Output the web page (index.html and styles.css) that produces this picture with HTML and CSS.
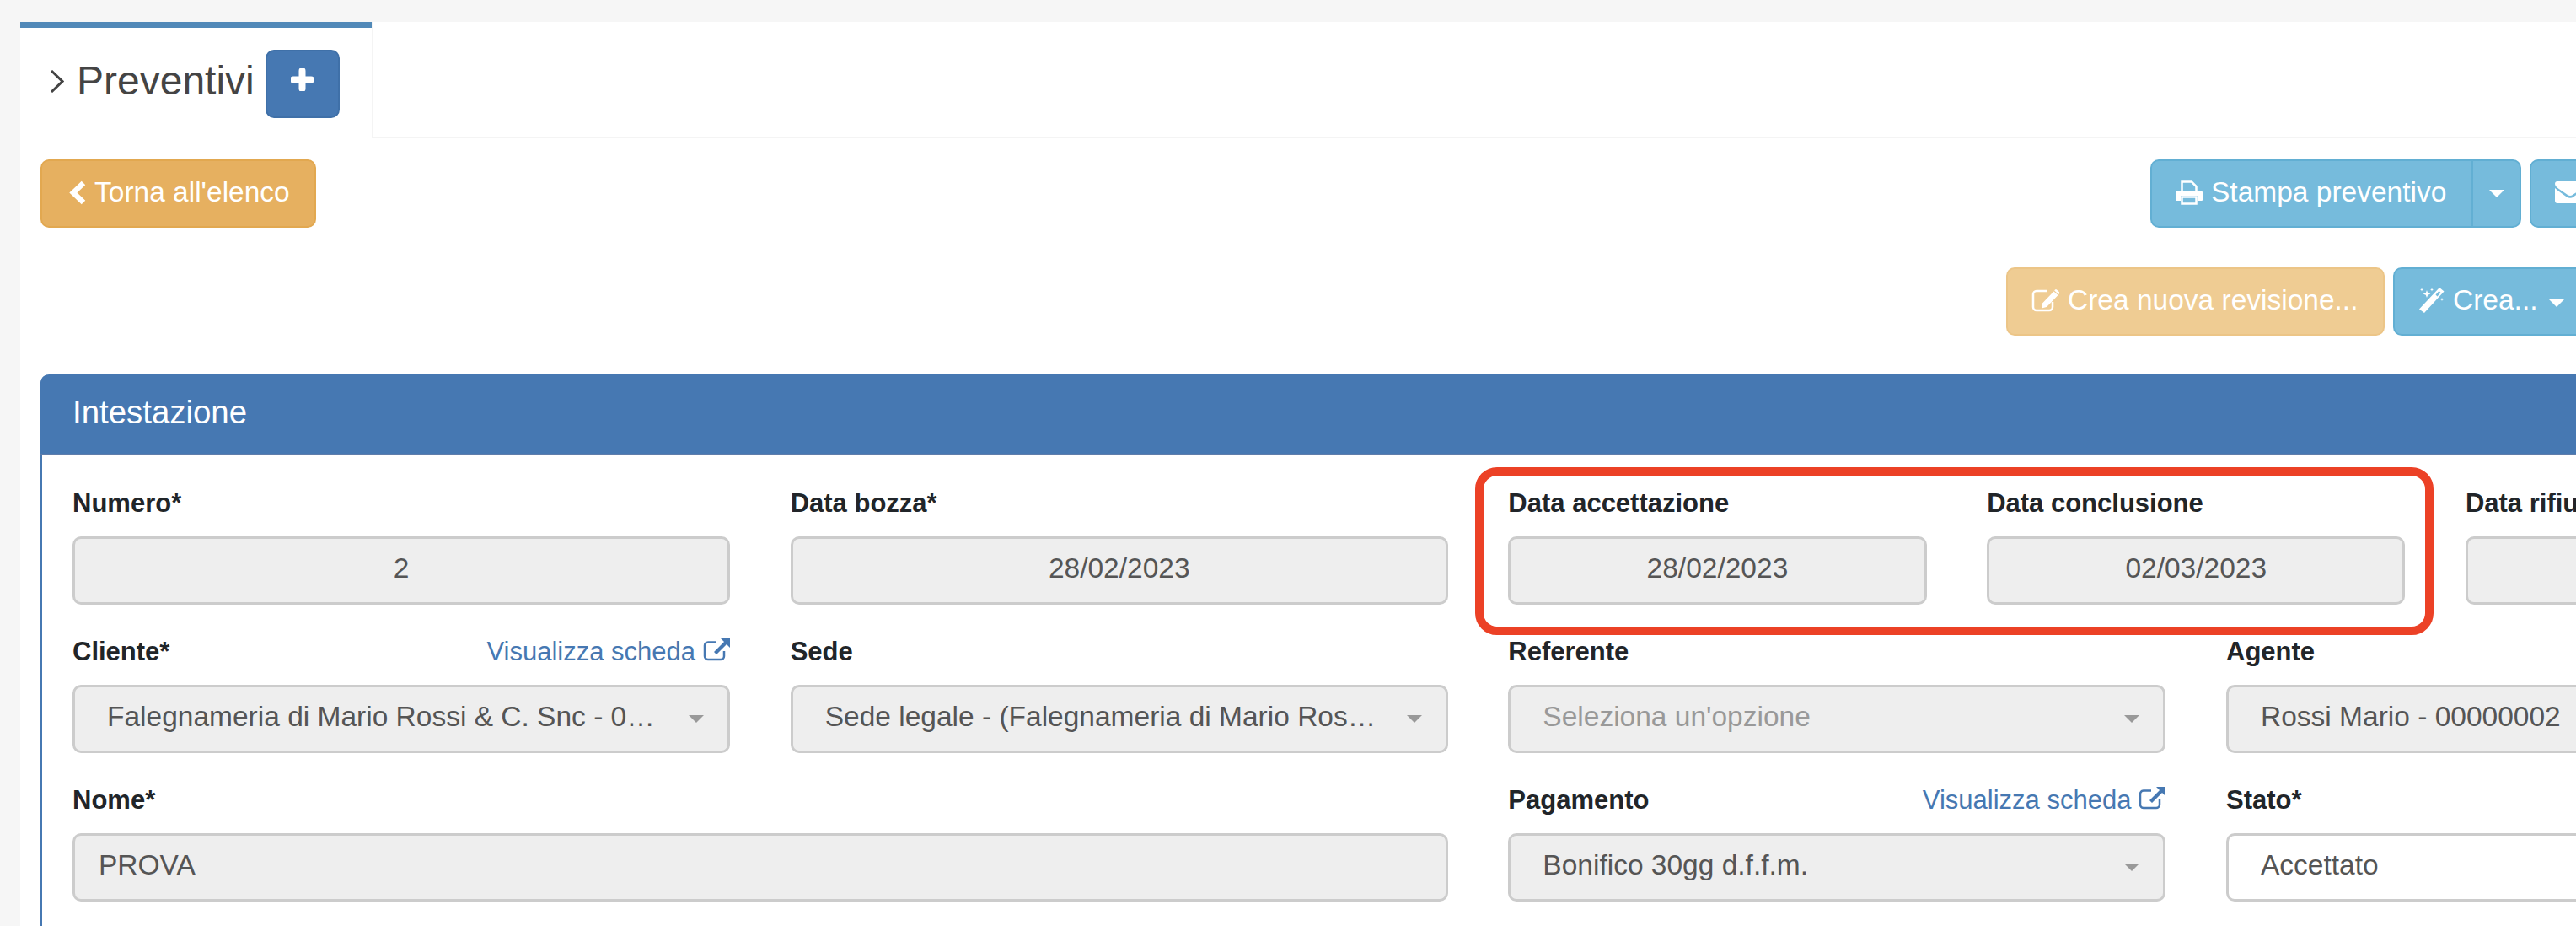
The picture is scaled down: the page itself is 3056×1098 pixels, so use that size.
FILE: index.html
```html
<!DOCTYPE html>
<html lang="it">
<head>
<meta charset="utf-8">
<title>Preventivi</title>
<link rel="stylesheet" href="styles.css">
</head>
<body>
<main class="card">
  <header class="tabs">
    <div class="tab">
      <svg class="tab-chevron" viewBox="0 0 16 27"><path d="M1 1l13 12.500L1 26"/></svg>
      <h1 class="tab-title">Preventivi</h1>
      <button class="btn-add" type="button" aria-label="Aggiungi"><svg viewBox="0 0 27 27"><path d="M13.500 3v21M3 13.500h21"/></svg></button>
    </div>
    <div class="tab-rest"></div>
  </header>

  <div class="toolbar">
    <button class="btn btn-warning btn-back" type="button">
      <svg class="ico-back" viewBox="0 0 20 29"><path d="M17 3L5 14.500 17 26"/></svg>
      Torna all'elenco
    </button>
    <div class="btn-group">
      <button class="btn btn-info btn-print" type="button">
        <svg class="ico-print" viewBox="0 0 32 29"><path class="solid" d="M2 12h28a2 2 0 0 1 2 2v9a1 1 0 0 1-1 1h-5v-6H6v6H1a1 1 0 0 1-1-1v-9a2 2 0 0 1 2-2z"/><path class="line" d="M7.500 12V1.500h11.500l5.500 5.500v5M7.500 19.500h17v8h-17z"/></svg>
        Stampa preventivo
      </button>
      <button class="btn btn-info btn-split" type="button" aria-label="Altre opzioni"><span class="caret"></span></button>
      <button class="btn btn-info btn-mail" type="button" aria-label="Invia">
        <svg class="ico-mail" viewBox="0 0 36 26"><path class="solid" d="M0 3a3 3 0 0 1 3-3h30a3 3 0 0 1 3 3c0 2-2 4-4 5.500l-11 7.500c-2 1.300-4 1.300-6 0L4 8.500C2 7 0 5 0 3zM0 8c3 3 8 6 14 10.500 2.500 1.700 5.500 1.700 8 0C28 14 33 11 36 8v15a3 3 0 0 1-3 3H3a3 3 0 0 1-3-3z"/></svg>
      </button>
    </div>
  </div>

  <div class="toolbar toolbar-second">
    <div class="btn-group">
      <button class="btn btn-warning btn-muted btn-revision" type="button">
        <svg class="ico-edit" viewBox="0 0 33 28"><path class="line" d="M19 3H6a4 4 0 0 0-4 4v15a4 4 0 0 0 4 4h15a4 4 0 0 0 4-4v-6"/><path class="solid" d="M26.500 3.500l5 4.500L18 22l-6 1.500 1-6zM28 1.500a1.500 1.500 0 0 1 2 0l3 2.800a1.500 1.500 0 0 1 0 2l-.800.800-5-4.500z"/></svg>
        Crea nuova revisione...
      </button>
      <button class="btn btn-info btn-create" type="button">
        <svg class="ico-wand" viewBox="0 0 30 30"><path class="solid" d="M24 0l5.500 4.500L6 30 0 25.500zM23.500 4l-4 4.500 2 2 4-4.500z" fill-rule="evenodd"/><path class="solid" d="M9 3l1.200 3.300L13.500 7.500 10.200 8.700 9 12 7.800 8.700 4.500 7.500 7.800 6.300zM3 .5l.6 1.400L5 2.500l-1.400.6L3 4.500l-.6-1.400L1 2.500l1.400-.6zM15 .5l.6 1.400 1.400.6-1.400.6-.6 1.400-.6-1.400-1.400-.6 1.400-.6zM27 12l.6 1.400 1.400.6-1.400.6-.6 1.400-.6-1.400-1.400-.6 1.400-.6z"/></svg>
        Crea...
        <span class="caret caret-inline"></span>
      </button>
    </div>
  </div>

  <section class="panel">
    <h2 class="panel-heading">Intestazione</h2>
    <div class="panel-body">
      <div class="field s3">
        <div class="label-row"><label class="label">Numero*</label></div>
        <div class="input center">2</div>
      </div>
      <div class="field s3">
        <div class="label-row"><label class="label">Data bozza*</label></div>
        <div class="input center">28/02/2023</div>
      </div>
      <div class="field s2">
        <div class="label-row"><label class="label">Data accettazione</label></div>
        <div class="input center">28/02/2023</div>
      </div>
      <div class="field s2">
        <div class="label-row"><label class="label">Data conclusione</label></div>
        <div class="input center">02/03/2023</div>
      </div>
      <div class="field s2">
        <div class="label-row"><label class="label">Data rifiuto</label></div>
        <div class="input center"></div>
      </div>

      <div class="field s3">
        <div class="label-row"><label class="label">Cliente*</label><a class="link" href="#">Visualizza scheda <svg class="ico-ext" viewBox="0 0 32 27"><path class="line" d="M15 4.500H6a4 4 0 0 0-4 4V21a4 4 0 0 0 4 4h15a4 4 0 0 0 4-4v-6"/><path class="solid" d="M21 0h11v11l-4-4-12 12-3-3L25 4z"/></svg></a></div>
        <div class="input select"><span class="value">Falegnameria di Mario Rossi &amp; C. Snc - 0…</span><span class="arrow"></span></div>
      </div>
      <div class="field s3">
        <div class="label-row"><label class="label">Sede</label></div>
        <div class="input select"><span class="value">Sede legale - (Falegnameria di Mario Ros…</span><span class="arrow"></span></div>
      </div>
      <div class="field s3">
        <div class="label-row"><label class="label">Referente</label></div>
        <div class="input select"><span class="value placeholder">Seleziona un'opzione</span><span class="arrow"></span></div>
      </div>
      <div class="field s3">
        <div class="label-row"><label class="label">Agente</label></div>
        <div class="input select"><span class="value">Rossi Mario - 00000002</span><span class="arrow"></span></div>
      </div>

      <div class="field s6">
        <div class="label-row"><label class="label">Nome*</label></div>
        <div class="input">PROVA</div>
      </div>
      <div class="field s3">
        <div class="label-row"><label class="label">Pagamento</label><a class="link" href="#">Visualizza scheda <svg class="ico-ext" viewBox="0 0 32 27"><path class="line" d="M15 4.500H6a4 4 0 0 0-4 4V21a4 4 0 0 0 4 4h15a4 4 0 0 0 4-4v-6"/><path class="solid" d="M21 0h11v11l-4-4-12 12-3-3L25 4z"/></svg></a></div>
        <div class="input select"><span class="value">Bonifico 30gg d.f.f.m.</span><span class="arrow"></span></div>
      </div>
      <div class="field s3">
        <div class="label-row"><label class="label">Stato*</label></div>
        <div class="input select editable"><span class="value">Accettato</span><span class="arrow"></span></div>
      </div>
    </div>
    <div class="annotation"></div>
  </section>
</main>
</body>
</html>
```

FILE: styles.css
```css
* { box-sizing: border-box; }

html, body { height: 100%; }

body {
  margin: 0;
  padding: 26px 0 0 24px;
  overflow: hidden;
  background: #f6f6f6;
  color: #555;
  font-family: "Liberation Sans", Arial, sans-serif;
  font-size: 33.500px;
}

svg { display: block; flex: none; }
.solid { fill: currentColor; }
.line { fill: none; stroke: currentColor; stroke-width: 2.500; }

.card {
  width: 3032px;
  height: 1072px;
  padding-left: 24px;
  background: #fff;
  overflow: hidden;
}

/* Tabs */
.tabs { display: flex; height: 138px; margin-left: -24px; }

.tab {
  display: flex;
  width: 417px;
  padding: 26px 0 0 36px;
  border-top: 7px solid #5189b8;
  background: #fff;
}

.tab-chevron {
  width: 16px;
  height: 27px;
  margin-top: 24px;
  fill: none;
  stroke: #444;
  stroke-width: 3;
}

.tab-title {
  margin: 0 0 0 15px;
  color: #444;
  font-size: 48px;
  font-weight: 400;
  line-height: 74px;
}

.btn-add {
  width: 88px;
  height: 81px;
  margin-left: 13px;
  padding: 0;
  border: 2px solid #3f70a8;
  border-radius: 10px;
  background: #4678b2;
}

.btn-add svg {
  width: 27px;
  height: 27px;
  margin: -11px auto 0;
  fill: none;
  stroke: #fff;
  stroke-width: 8;
  stroke-linecap: round;
}

.tab-rest {
  flex: 1;
  border-bottom: 2px solid #f4f4f4;
  border-left: 2px solid #f4f4f4;
}

/* Toolbars */
.toolbar {
  display: flex;
  justify-content: space-between;
  width: 3073px;
  margin-top: 25px;
}

.toolbar-second { justify-content: flex-end; margin-top: 47px; }

.btn-group { display: flex; }

.btn {
  display: flex;
  align-items: center;
  height: 81px;
  padding-bottom: 4px;
  border: 2px solid;
  border-radius: 10px;
  color: #fff;
  font-family: inherit;
  font-size: 33.500px;
  white-space: nowrap;
}

.btn-warning { background: #e6b060; border-color: #e2a850; }
.btn-muted { background: #efcc93; border-color: #ecc587; }
.btn-info { background: #76bbdc; border-color: #62afd3; }

.btn-back { width: 327px; padding-left: 32px; gap: 10px; }
.ico-back { width: 20px; height: 29px; fill: none; stroke: #fff; stroke-width: 6.500; }

.btn-print {
  width: 381px;
  padding-left: 28px;
  gap: 10px;
  border-right: 0;
  border-radius: 10px 0 0 10px;
}
.ico-print { width: 32px; height: 29px; }

.btn-split {
  justify-content: center;
  width: 59px;
  padding: 0;
  border-left: 2px solid #62afd3;
  border-radius: 0 10px 10px 0;
}

.caret {
  width: 0;
  height: 0;
  border-top: 9px solid #fff;
  border-right: 9px solid transparent;
  border-left: 9px solid transparent;
}

.btn-mail { width: 120px; margin-left: 10px; padding-left: 28px; }
.ico-mail { width: 36px; height: 26px; }

.btn-revision { width: 449px; padding-left: 28px; gap: 10px; }
.ico-edit { width: 33px; height: 28px; }

.btn-create { width: 282px; margin-left: 10px; padding-left: 29px; gap: 10px; }
.ico-wand { width: 30px; height: 30px; }
.caret-inline { margin-top: 6px; margin-left: 3px; }

/* Panel */
.panel {
  position: relative;
  width: 3100px;
  height: 660px;
  margin-top: 46px;
  border-left: 2px solid #4678b2;
  border-radius: 10px 0 0 0;
}

.panel-heading {
  height: 96px;
  margin: 0 0 0 -2px;
  padding: 0 0 0 38px;
  border-bottom: 2px solid #5f7dab;
  border-radius: 10px 0 0 0;
  background: #4678b2;
  color: #fff;
  font-size: 38.400px;
  font-weight: 400;
  line-height: 90px;
}

.panel-body {
  display: grid;
  grid-template-columns: repeat(12, 212.300px);
  column-gap: 71.600px;
  row-gap: 36px;
  padding: 37px 0 0 36px;
}

.field.s2 { grid-column: span 2; }
.field.s3 { grid-column: span 3; }
.field.s6 { grid-column: span 6; }

.label-row {
  display: flex;
  align-items: center;
  justify-content: space-between;
  height: 40px;
  margin-bottom: 19px;
}

.label {
  color: #212529;
  font-size: 31px;
  font-weight: 700;
  white-space: nowrap;
}

.link {
  display: flex;
  align-items: center;
  gap: 9px;
  color: #4678b2;
  font-size: 31px;
  text-decoration: none;
  white-space: nowrap;
}

.ico-ext { width: 32px; height: 27px; margin-top: -6px; }

.input {
  display: flex;
  align-items: center;
  height: 81px;
  padding: 0 28px 5px;
  border: 3px solid #ccc;
  border-radius: 10px;
  background: #eee;
  white-space: nowrap;
}

.center { justify-content: center; }

.select { justify-content: space-between; padding: 0 28px 5px 38px; }
.editable { background: #fff; }
.placeholder { color: #999; }

.arrow {
  flex: none;
  width: 0;
  height: 0;
  margin-top: 5px;
  border-top: 9px solid #999;
  border-right: 9px solid transparent;
  border-left: 9px solid transparent;
}

/* Red annotation drawn over the screenshot */
.annotation {
  position: absolute;
  top: 110px;
  left: 1700px;
  width: 1137px;
  height: 199px;
  border: 10px solid #ec4126;
  border-radius: 26px;
  pointer-events: none;
}
```
